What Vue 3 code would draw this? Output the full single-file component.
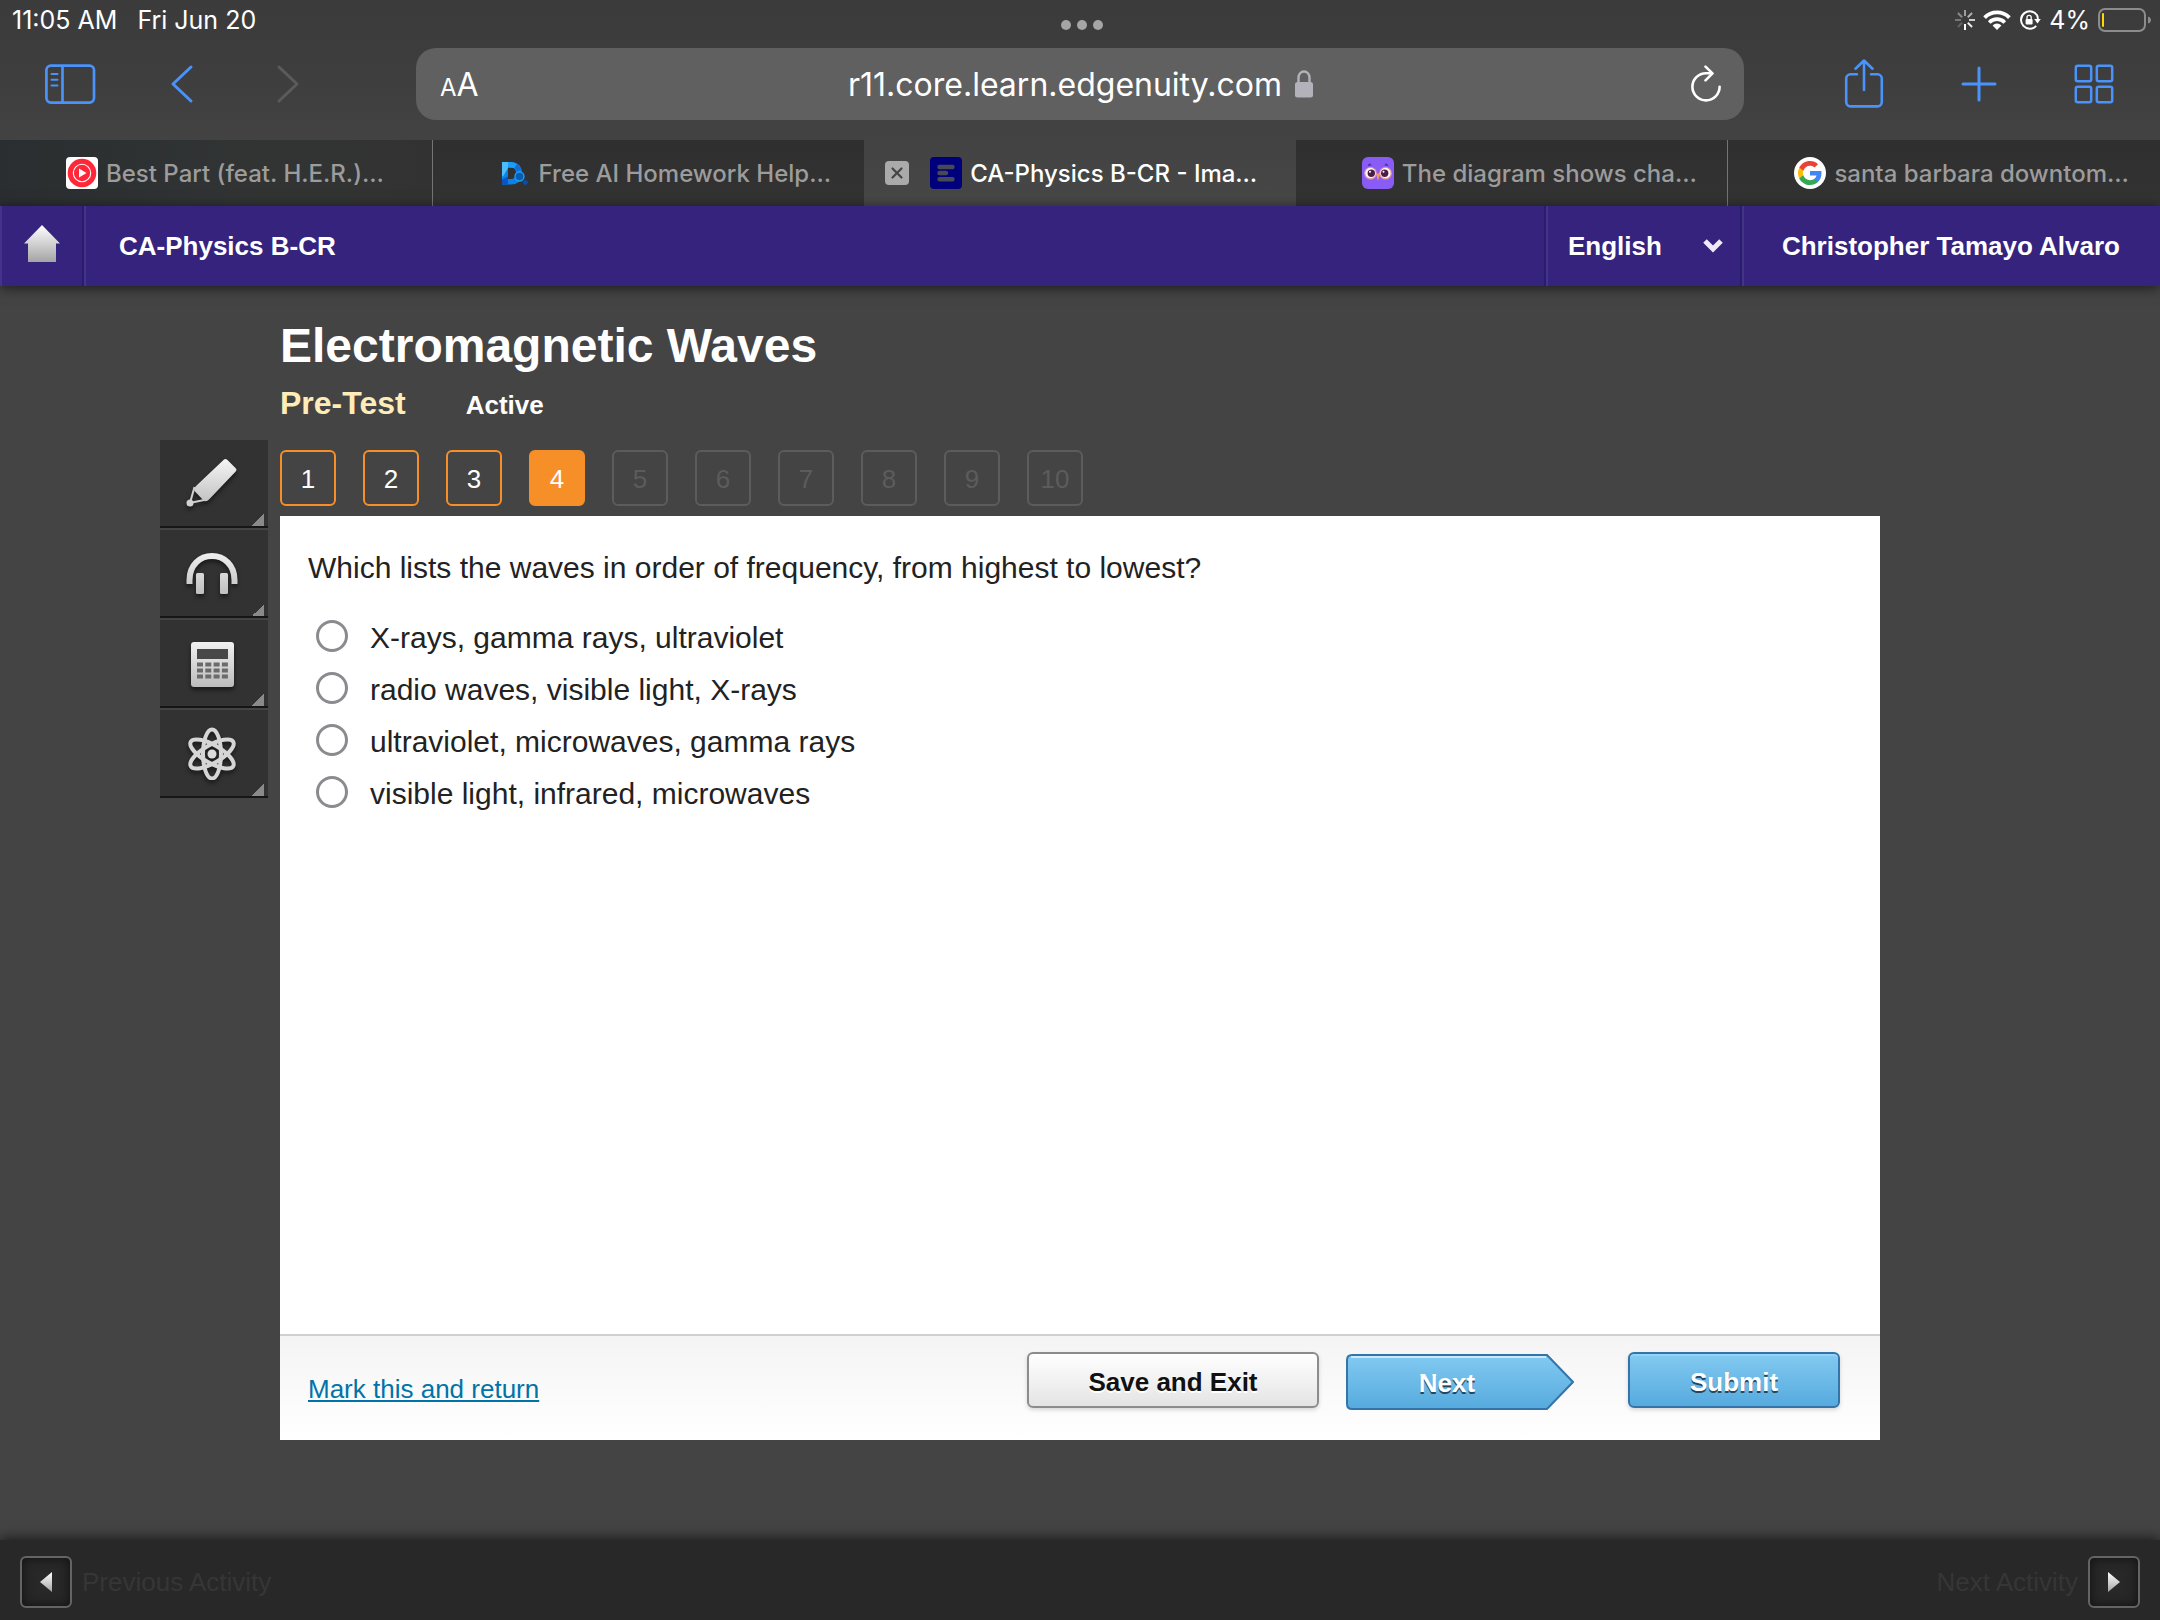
<template>
    <div class="page">
        <header class="browser">
            <div class="status_bar">
                <div class="status_left">
                    <span>11:05 AM</span>
                    <span>Fri Jun 20</span>
                </div>
                <div class="dots"><i></i><i></i><i></i></div>
                <div class="status_right">
                    <svg viewBox="0 0 20 20" width="20" height="20">
                        <line
                            v-for="(opacity, index) in spinnerOpacity"
                            :key="index"
                            x1="10"
                            y1="0"
                            x2="10"
                            y2="6"
                            stroke="#fff"
                            stroke-width="2"
                            :opacity="opacity"
                            :transform="`rotate(${index * 45} 10 10)`"
                        />
                    </svg>
                    <svg viewBox="0 0 28 20" width="28" height="20">
                        <path d="M1.6 7.6a17.4 17.4 0 0 1 24.8 0" fill="none" stroke="#fff" stroke-width="3.8" />
                        <path d="M6.2 12.4a11 11 0 0 1 15.6 0" fill="none" stroke="#fff" stroke-width="3.6" />
                        <path d="M14 20l-4.4-4.6a6.3 6.3 0 0 1 8.8 0z" fill="#fff" />
                    </svg>
                    <svg viewBox="0 0 22 20" width="22" height="20">
                        <path d="M18 5.2A8.7 8.7 0 1 0 17.2 15.8" fill="none" stroke="#fff" stroke-width="2" />
                        <path d="M18 5q1 2 .8 5" fill="none" stroke="#fff" stroke-width="2" />
                        <path d="M15.2 9h6.6l-3.3 4.4z" fill="#fff" />
                        <rect x="6.6" y="9" width="7" height="5.6" rx="1" fill="#fff" />
                        <path d="M8 9.5V7.4a2.1 2.1 0 0 1 4.2 0v2.1" fill="none" stroke="#fff" stroke-width="1.3" />
                    </svg>
                    <span>4%</span>
                    <svg viewBox="0 0 54 24" width="54" height="24">
                        <rect x="1" y="1" width="46" height="22" rx="6" fill="none" stroke="#8c8c8c" stroke-width="2" />
                        <rect x="4" y="5" width="2" height="14" rx="1" fill="#ffd60a" />
                        <path d="M50 8.5c4 1 4 6 0 7z" fill="#8c8c8c" />
                    </svg>
                </div>
            </div>

            <div class="tool_bar">
                <div class="nav_left">
                    <button class="icon_button" aria-label="Sidebar">
                        <svg viewBox="0 0 52 40" width="52" height="40" fill="none" stroke="#4a93fb" stroke-width="2.7">
                            <rect x="2.4" y="1.6" width="47.6" height="37" rx="4.5" />
                            <path d="M18.5 2v36" />
                            <path d="M7.5 10h6M7.5 15.7h6M7.5 21.4h6" stroke-width="2" stroke-linecap="round" />
                        </svg>
                    </button>
                    <div class="history">
                        <button class="icon_button" aria-label="Back">
                            <svg viewBox="0 0 24 40" width="24" height="40" fill="none" stroke="#4a93fb" stroke-width="3" stroke-linecap="round" stroke-linejoin="round">
                                <path d="M21 3L3 20l18 17" />
                            </svg>
                        </button>
                        <button class="icon_button" aria-label="Forward" disabled>
                            <svg viewBox="0 0 24 40" width="24" height="40" fill="none" stroke="#5b5b5b" stroke-width="3" stroke-linecap="round" stroke-linejoin="round">
                                <path d="M3 3l18 17L3 37" />
                            </svg>
                        </button>
                    </div>
                </div>
                <div class="address">
                    <button class="text_size" aria-label="Page settings"><small>A</small>A</button>
                    <div class="url">
                        <input type="text" v-model="address" aria-label="Address" />
                        <svg viewBox="0 0 20 28" width="20" height="28">
                            <rect x="1" y="12" width="18" height="15.5" rx="2.5" fill="#b3b2ba" />
                            <path d="M4.5 13V7.5a5.5 6 0 0 1 11 0V13" fill="none" stroke="#b3b2ba" stroke-width="2.4" />
                        </svg>
                    </div>
                    <button class="reload" aria-label="Reload">
                        <svg viewBox="0 0 32 38" width="32" height="38" fill="none" stroke="#fff" stroke-width="2.6" stroke-linecap="round" stroke-linejoin="round">
                            <path d="M21 8.2h-5A13.6 13.6 0 1 0 29.6 21.8" />
                            <path d="M15.5 1.6l7 6.8-7 7" />
                        </svg>
                    </button>
                </div>
                <div class="nav_right">
                    <button class="icon_button" aria-label="Share">
                        <svg viewBox="0 0 40 50" width="40" height="50" fill="none" stroke="#4a93fb" stroke-width="2.6" stroke-linecap="round" stroke-linejoin="round">
                            <path d="M13 15.3H6.5a4.3 4.3 0 0 0-4.3 4.3v23.5a4.3 4.3 0 0 0 4.3 4.3h27a4.3 4.3 0 0 0 4.3-4.3V19.6a4.3 4.3 0 0 0-4.3-4.3H27" />
                            <path d="M20 31V2M11.5 9.7L20 1.5l8.500 8.2" />
                        </svg>
                    </button>
                    <button class="icon_button" aria-label="New tab">
                        <svg viewBox="0 0 40 40" width="40" height="40" stroke="#4a93fb" stroke-width="3" stroke-linecap="round">
                            <path d="M20 4v32M4 20h32" />
                        </svg>
                    </button>
                    <button class="icon_button" aria-label="All tabs">
                        <svg viewBox="0 0 40 40" width="40" height="40" fill="none" stroke="#4a93fb" stroke-width="2.5">
                            <rect x="1.8" y="1.8" width="15.4" height="15.4" rx="2" />
                            <rect x="22.8" y="1.8" width="15.4" height="15.4" rx="2" />
                            <rect x="1.8" y="22.8" width="15.4" height="15.4" rx="2" />
                            <rect x="22.8" y="22.8" width="15.4" height="15.4" rx="2" />
                        </svg>
                    </button>
                </div>
            </div>

            <nav class="tabs">
                <div v-for="tab in tabs" :key="tab.id" class="tab" :class="{ active: tab.id === activeTab }">
                    <div class="close_slot">
                        <button v-if="tab.id === activeTab" class="close" aria-label="Close tab">
                            <svg viewBox="0 0 24 24" width="24" height="24" stroke="#454545" stroke-width="2.2" stroke-linecap="round">
                                <path d="M7.5 7.5l9 9M16.5 7.5l-9 9" />
                            </svg>
                        </button>
                    </div>
                    <a href="#" @click.prevent="activeTab = tab.id">
                        <svg v-if="tab.id === 'music'" viewBox="0 0 32 32" width="32" height="32">
                            <rect width="32" height="32" rx="4" fill="#fff" />
                            <circle cx="16" cy="16" r="14.3" fill="#ff2738" />
                            <circle cx="16" cy="16" r="8.7" fill="none" stroke="#fff" stroke-width="1.1" />
                            <path d="M13 11.5l7.5 4.5-7.5 4.5z" fill="#fff" />
                        </svg>
                        <svg v-else-if="tab.id === 'homework'" viewBox="0 0 32 32" width="32" height="32">
                            <path fill-rule="evenodd" d="M3 5h9c7.5 0 11 5 11 11 0 7-4 11.5-11 11.5H3zM9 10.5V22h3c3.5 0 5-2.5 5-6 0-3-1.500-5.500-5-5.500z" fill="#0b82ea" />
                            <path d="M3 5h6v6l-4 7-2 2z" fill="#4cbcfb" />
                            <path d="M9 5h4l5 2-3 4-6-.5z" fill="#16a0fa" />
                            <path d="M3 27.5v-5l6-3v8z" fill="#0a55c4" />
                            <path d="M18 7l4 5-4 2-2-3z" fill="#1a68cf" />
                            <circle cx="20.5" cy="19.5" r="4.5" fill="#0a5cae" stroke="#1f9bf2" stroke-width="1.4" />
                            <path d="M26.5 22.5l3 3-3 3-3-3z" fill="#0a4fae" />
                        </svg>
                        <svg v-else-if="tab.id === 'physics'" viewBox="0 0 32 32" width="32" height="32">
                            <rect width="32" height="32" rx="4" fill="#00007d" />
                            <path d="M9.5 10h13M9.5 16h6.5M9.5 22.2h13" stroke="#474a55" stroke-width="4.4" stroke-linecap="round" />
                        </svg>
                        <svg v-else-if="tab.id === 'diagram'" viewBox="0 0 32 32" width="32" height="32">
                            <rect width="32" height="32" rx="6" fill="#8a5cf6" />
                            <g fill="#fff" stroke="#e99aa0" stroke-width="1.2">
                                <circle cx="8.5" cy="16.2" r="5.7" />
                                <circle cx="23.5" cy="16.2" r="5.7" />
                            </g>
                            <circle cx="9.3" cy="16.2" r="3.7" fill="#4a1d45" />
                            <circle cx="22.7" cy="16.2" r="3.7" fill="#4a1d45" />
                            <circle cx="8" cy="14.8" r="1" fill="#fff" />
                            <circle cx="21.5" cy="14.8" r="1" fill="#fff" />
                            <path d="M14 16.5h4L16 24z" fill="#f59b60" />
                            <path d="M6 8.8l2-1.6 1 1.3M23 8.5l1-1.3 2 1.6" fill="none" stroke="#4a2b9c" stroke-width="1.2" />
                        </svg>
                        <svg v-else viewBox="0 0 32 32" width="32" height="32">
                            <circle cx="16" cy="16" r="16" fill="#fff" />
                            <g transform="translate(4 4)">
                                <path fill="#4285f4" d="M23.5 12.27c0-.79-.07-1.54-.19-2.27H12v4.51h6.47c-.29 1.48-1.14 2.73-2.4 3.58v3h3.86c2.26-2.09 3.57-5.17 3.57-8.82z" />
                                <path fill="#34a853" d="M12 24c3.24 0 5.95-1.08 7.93-2.91l-3.86-3c-1.08.72-2.45 1.16-4.07 1.16-3.13 0-5.78-2.11-6.73-4.96H1.29v3.09C3.26 21.3 7.31 24 12 24z" />
                                <path fill="#fbbc05" d="M5.27 14.29c-.25-.72-.38-1.49-.38-2.29s.14-1.57.38-2.29V6.62H1.29C.47 8.24 0 10.06 0 12s.47 3.76 1.29 5.38z" />
                                <path fill="#ea4335" d="M12 4.75c1.77 0 3.35.61 4.6 1.8l3.42-3.42C17.95 1.19 15.24 0 12 0 7.31 0 3.26 2.7 1.29 6.62l3.98 3.09C6.22 6.86 8.87 4.75 12 4.75z" />
                            </g>
                        </svg>
                        <span>{{ tab.title }}</span>
                    </a>
                </div>
            </nav>
        </header>

        <div class="course_bar">
            <a href="#" class="home" aria-label="Home">
                <svg viewBox="0 0 40 42" width="40" height="42">
                    <defs>
                        <linearGradient id="metal" x1="0" y1="0" x2="0" y2="1">
                            <stop offset="0" stop-color="#fff" />
                            <stop offset="1" stop-color="#a4a4a4" />
                        </linearGradient>
                    </defs>
                    <path d="M20 1l18 18.5h-4V38H6V19.5H2z" fill="url(#metal)" />
                </svg>
            </a>
            <a href="#" class="course_name">CA-Physics B-CR</a>
            <div class="language">
                <select v-model="language" aria-label="Language">
                    <option>English</option>
                </select>
                <svg viewBox="0 0 22 16" width="22" height="16" fill="none" stroke="#eeeaf8" stroke-width="5">
                    <path d="M3 3l8 8 8-8" />
                </svg>
            </div>
            <a href="#" class="user">Christopher Tamayo Alvaro</a>
        </div>

        <main class="content">
            <aside class="tools">
                <button aria-label="Highlighter">
                    <svg viewBox="0 0 54 54" width="54" height="54">
                        <path d="M39 3.5q1.5-1.3 3.2.3l8.5 8.5q1.5 1.5 0 3.2L24 43.5q-2 2.5-5 1.5L9.5 35q-.5-3 1.5-5z" fill="url(#steel)" />
                        <path d="M9.5 31L5 47l14-3" fill="none" stroke="#cfcfcf" stroke-width="2" />
                        <circle cx="5" cy="47" r="3.5" fill="#d2d2d2" />
                    </svg>
                </button>
                <button aria-label="Text to speech">
                    <svg viewBox="0 0 54 54" width="54" height="54">
                        <path d="M4.5 38v-4C4.5 19 15 10 27 10s22.500 9 22.500 24v4" fill="none" stroke="url(#steel)" stroke-width="6" />
                        <rect x="11" y="27" width="8" height="21" rx="1.5" fill="url(#steel)" />
                        <rect x="35" y="27" width="8" height="21" rx="1.5" fill="url(#steel)" />
                    </svg>
                </button>
                <button aria-label="Calculator">
                    <svg viewBox="0 0 54 54" width="54" height="54">
                        <rect x="6" y="6" width="43" height="45" rx="3" fill="url(#steel)" />
                        <rect x="12" y="13" width="31" height="10" fill="#484848" />
                        <path d="M12 28.5h31M12 34.5h31M12 40.5h31" stroke="#6b6b6b" stroke-width="4" stroke-dasharray="6 2.3" />
                    </svg>
                </button>
                <button aria-label="Science reference">
                    <svg viewBox="0 0 54 54" width="54" height="54">
                        <g fill="none" stroke="#d6d6d6" stroke-width="4">
                            <ellipse cx="27" cy="28" rx="9" ry="24.5" />
                            <ellipse cx="27" cy="28" rx="9" ry="24.5" transform="rotate(60 27 28)" />
                            <ellipse cx="27" cy="28" rx="9" ry="24.5" transform="rotate(120 27 28)" />
                        </g>
                        <circle cx="27" cy="28" r="4.5" fill="#dcdcdc" />
                    </svg>
                </button>
                <svg width="0" height="0">
                    <defs>
                        <linearGradient id="steel" gradientUnits="userSpaceOnUse" x1="0" y1="4" x2="0" y2="50">
                            <stop offset="0" stop-color="#f4f4f4" />
                            <stop offset="1" stop-color="#bdbdbd" />
                        </linearGradient>
                    </defs>
                </svg>
            </aside>

            <section class="activity">
                <h1>Electromagnetic Waves</h1>
                <div class="sub_title">
                    <h2>Pre-Test</h2>
                    <span>Active</span>
                </div>
                <div class="question_numbers">
                    <button
                        v-for="n in 10"
                        :key="n"
                        :class="{ visited: n < currentQuestion, current: n === currentQuestion }"
                        :disabled="n > currentQuestion"
                    >
                        {{ n }}
                    </button>
                </div>
                <div class="panel">
                    <div class="question">
                        <p>Which lists the waves in order of frequency, from highest to lowest?</p>
                        <label v-for="(item, index) in answers" :key="index" :for="'answer_' + index">
                            <input type="radio" name="answer" :id="'answer_' + index" :value="item" v-model="picked" />
                            {{ item }}
                        </label>
                    </div>
                    <div class="panel_footer">
                        <a href="#">Mark this and return</a>
                        <button class="save">Save and Exit</button>
                        <button class="next">
                            <svg viewBox="0 0 228 56" width="228" height="56">
                                <defs>
                                    <linearGradient id="sky" x1="0" y1="0" x2="0" y2="1">
                                        <stop offset="0" stop-color="#82caf1" />
                                        <stop offset="1" stop-color="#56aade" />
                                    </linearGradient>
                                </defs>
                                <path d="M6 1h195l26 27-26 27H6q-5 0-5-5V6q0-5 5-5z" fill="url(#sky)" stroke="#3474a8" stroke-width="2" />
                                <path d="M5 3h195" stroke="#c9e9fb" stroke-width="2" />
                            </svg>
                            <span>Next</span>
                        </button>
                        <button class="submit">Submit</button>
                    </div>
                </div>
            </section>
        </main>

        <footer class="activity_bar">
            <button>
                <span class="arrow_box">
                    <svg viewBox="0 0 12 20" width="12" height="20"><path d="M12 0v20L0 10z" fill="url(#metal)" /></svg>
                </span>
                Previous Activity
            </button>
            <button>
                Next Activity
                <span class="arrow_box">
                    <svg viewBox="0 0 12 20" width="12" height="20"><path d="M0 0v20l12-10z" fill="url(#metal)" /></svg>
                </span>
            </button>
        </footer>
    </div>
</template>

<script setup>
import { ref } from 'vue'

const address = ref('r11.core.learn.edgenuity.com')
const spinnerOpacity = [0.5, 0.6, 0.75, 0.9, 1, 0.2, 0.3, 0.4]

//瀏覽器分頁
const activeTab = ref('physics')
const tabs = [
    { id: 'music', title: 'Best Part (feat. H.E.R.)…' },
    { id: 'homework', title: 'Free AI Homework Help…' },
    { id: 'physics', title: 'CA-Physics B-CR - Ima…' },
    { id: 'diagram', title: 'The diagram shows cha…' },
    { id: 'search', title: 'santa barbara downtom…' },
]

const language = ref('English')

//題目
const currentQuestion = ref(4)
const picked = ref('')
const answers = [
    'X-rays, gamma rays, ultraviolet',
    'radio waves, visible light, X-rays',
    'ultraviolet, microwaves, gamma rays',
    'visible light, infrared, microwaves',
]
</script>

<style>
body {
    margin: 0;
    background-color: #444;
}
</style>

<style scoped>
* {
    box-sizing: border-box;
}
.page {
    min-height: 100vh;
    display: flex;
    flex-direction: column;
    background-color: #444;
    font-family: 'Liberation Sans', Arial, sans-serif;
}
button,
input,
select {
    margin: 0;
    padding: 0;
    border: 0;
    background: none;
    color: inherit;
    font: inherit;
}
button {
    cursor: pointer;
}
a {
    color: inherit;
    text-decoration: none;
}
svg {
    display: block;
    flex-shrink: 0;
}

/* 瀏覽器 */
.browser {
    font-family: Inter, 'Liberation Sans', sans-serif;
    color: #fff;
    background: linear-gradient(#3b3b3b, #3d3d3d 30%, #474747);
}
.status_bar {
    height: 40px;
    padding: 0 8px 0 12px;
    display: grid;
    grid-template-columns: 1fr auto 1fr;
    align-items: center;
    font-size: 25px;
}
.status_left {
    display: flex;
    gap: 20px;
}
.dots {
    display: flex;
    gap: 6px;
    padding-top: 10px;
}
.dots i {
    width: 10px;
    height: 10px;
    border-radius: 50%;
    background-color: #a5a5a5;
}
.status_right {
    display: flex;
    justify-content: flex-end;
    align-items: center;
    gap: 8px;
}
.tool_bar {
    height: 100px;
    display: grid;
    grid-template-columns: 416px 1fr 416px;
    align-items: center;
    padding-bottom: 12px;
}
.icon_button {
    width: 52px;
    height: 52px;
    display: flex;
    align-items: center;
    justify-content: center;
}
.nav_left {
    display: flex;
    gap: 60px;
    padding-left: 44px;
}
.history {
    display: flex;
    gap: 54px;
}
.nav_right {
    display: flex;
    justify-content: flex-end;
    gap: 63px;
    padding-right: 40px;
}
.address {
    height: 72px;
    border-radius: 20px;
    background-color: #606060;
    display: grid;
    grid-template-columns: 72px 1fr 76px;
    align-items: center;
}
.text_size {
    padding-left: 24px;
    text-align: left;
    font-size: 32px;
    white-space: nowrap;
}
.text_size small {
    font-size: 24px;
}
.url {
    display: flex;
    align-items: center;
    justify-content: center;
    gap: 12px;
}
.url input {
    width: 440px;
    font-size: 32px;
    text-align: right;
    outline: none;
}
.reload {
    display: flex;
    justify-content: center;
}
.tabs {
    display: flex;
    height: 66px;
}
.tab {
    flex: 1;
    min-width: 0;
    display: flex;
    align-items: center;
    gap: 21px;
    padding-left: 21px;
    background: linear-gradient(#2f2f2f, #333);
    color: #9c9c9c;
    font-size: 24px;
    font-weight: 500;
}
.tab:first-child {
    background: linear-gradient(90deg, #2a2e30, #323434 60%, #323232);
}
.tab:first-child,
.tab:nth-child(4) {
    border-right: 1px solid #757575;
}
.tab.active {
    background: none;
    color: #fff;
}
.tab a {
    display: flex;
    align-items: center;
    gap: 8px;
    white-space: nowrap;
}
.close_slot {
    width: 24px;
}
.close {
    display: block;
    border-radius: 4px;
    background-color: #aaa;
}

/* 課程列 */
.course_bar {
    height: 80px;
    display: flex;
    color: #fff;
    background-color: #35237e;
    font-size: 26px;
    font-weight: bold;
    line-height: 80px;
    box-shadow: 0 2px 12px rgba(0, 0, 0, 0.6);
}
.home {
    width: 84px;
    padding: 18px 0 0 20px;
    border-left: 2px solid #43338a;
    box-shadow: inset -2px 0 #2b1c69;
}
.course_name {
    flex: 1;
    padding-left: 33px;
    border-left: 2px solid #43338a;
}
.language {
    position: relative;
    width: 196px;
    border-left: 2px solid #43338a;
    border-right: 2px solid #2b1c69;
    box-shadow: -2px 0 #2b1c69;
}
.language select {
    width: 100%;
    height: 80px;
    padding-left: 20px;
    appearance: none;
}
.language svg {
    position: absolute;
    right: 16px;
    top: 32px;
    pointer-events: none;
}
.user {
    padding: 0 40px 0 38px;
    border-left: 2px solid #43338a;
}

/* 內容 */
.content {
    flex: 1;
    display: grid;
    grid-template-columns: minmax(120px, 1fr) minmax(0, 1600px) minmax(20px, 1fr);
    padding: 32px 0 100px;
}
.tools {
    justify-self: end;
    display: flex;
    flex-direction: column;
    gap: 2px;
    padding: 122px 12px 0 0;
}
.tools button {
    width: 108px;
    height: 88px;
    padding-right: 4px;
    display: flex;
    align-items: center;
    justify-content: center;
    border-bottom: 2px solid #161616;
    background: linear-gradient(135deg, transparent 50%, #8a8a8a 50%) no-repeat right 4px bottom / 12px 12px #323232;
}
.tools button svg {
    filter: drop-shadow(0 3px 2px rgba(0, 0, 0, 0.5));
}
.activity {
    display: flex;
    flex-direction: column;
}
h1 {
    margin: 0 0 9px;
    color: #fff;
    font-size: 48px;
    line-height: 56px;
}
.sub_title {
    display: flex;
    align-items: baseline;
    gap: 60px;
    margin-bottom: 25px;
    color: #fff;
    font-size: 26px;
    font-weight: bold;
    line-height: 40px;
}
h2 {
    margin: 0;
    color: #ffecb8;
    font-size: 32px;
}
.question_numbers {
    display: flex;
    gap: 27px;
    margin-bottom: 10px;
}
.question_numbers button {
    width: 56px;
    height: 56px;
    padding-top: 2px;
    border: 2px solid #5c5c5c;
    border-radius: 6px;
    color: #5c5c5c;
    font-size: 26px;
}
.question_numbers .visited {
    border-color: #f78f28;
    color: #fff;
}
.question_numbers .current {
    border-color: #f78f28;
    background-color: #f78f28;
    color: #fff;
}
.panel {
    flex: 1;
    display: flex;
    flex-direction: column;
    background-color: #fff;
}
.question {
    flex: 1;
    padding: 34px 28px;
    color: #222;
    font-size: 30px;
}
.question p {
    margin: 0 0 26px;
    line-height: 36px;
}
.question label {
    display: flex;
    align-items: center;
    line-height: 52px;
}
.question input {
    width: 32px;
    height: 32px;
    margin: 0 22px 4px 8px;
    appearance: none;
    border: 3px solid #8b8b8f;
    border-radius: 50%;
}
.question input:checked {
    background: radial-gradient(#3474a8 45%, transparent 50%);
}
.panel_footer {
    height: 106px;
    padding: 16px 40px 0 28px;
    display: flex;
    align-items: flex-start;
    border-top: 2px solid #d0d0d0;
    background: linear-gradient(#f4f4f4, #fff);
    font-size: 26px;
}
.panel_footer a {
    margin-right: auto;
    color: #0074a8;
    line-height: 74px;
    text-decoration: underline;
}
.panel_footer button {
    height: 56px;
    font-weight: bold;
}
.save {
    width: 292px;
    margin-right: 27px;
    padding-top: 4px;
    border: 2px solid #8c8c8c;
    border-radius: 6px;
    color: #111;
    background: linear-gradient(#fff, #e4e4e4);
    box-shadow: 0 2px 4px rgba(0, 0, 0, 0.15);
    text-shadow: 0 2px #fff;
}
.next {
    position: relative;
    width: 228px;
    margin: 2px 54px 0 0;
    padding: 2px 26px 0 0;
    color: #fff;
    text-shadow: 0 2px #24475f;
}
.next svg {
    position: absolute;
    left: 0;
    top: 0;
}
.next span {
    position: relative;
}
.submit {
    width: 212px;
    padding-top: 4px;
    border: 2px solid #3474a8;
    border-radius: 6px;
    color: #fff;
    background: linear-gradient(#82caf1, #56aade);
    box-shadow: 0 2px 4px rgba(0, 0, 0, 0.15), inset 0 2px #93d4f6;
    text-shadow: 0 2px #24475f;
}

/* 底部 */
.activity_bar {
    height: 80px;
    padding: 4px 20px 0;
    display: flex;
    align-items: center;
    justify-content: space-between;
    background-color: #282828;
    box-shadow: 0 -2px 12px rgba(0, 0, 0, 0.6);
    color: #363636;
    font-size: 26px;
}
.activity_bar button {
    display: flex;
    align-items: center;
    gap: 10px;
}
.arrow_box {
    width: 52px;
    height: 52px;
    display: flex;
    align-items: center;
    justify-content: center;
    border: 2px solid #646464;
    border-radius: 6px;
    box-shadow: inset 0 0 12px #111;
}
</style>
